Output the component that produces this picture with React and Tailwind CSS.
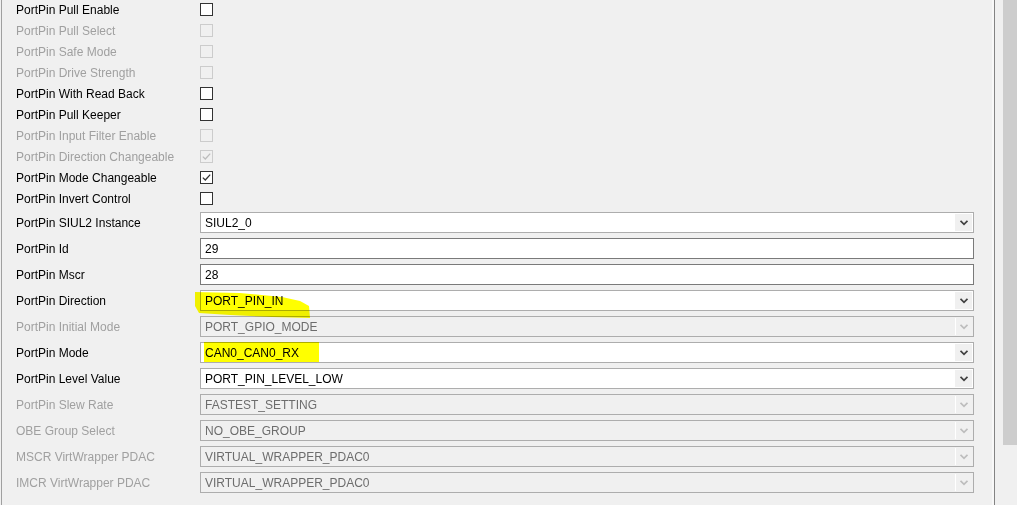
import React from "react"

const checkRows = [
  { label: "PortPin Pull Enable", on: true, checked: false },
  { label: "PortPin Pull Select", on: false, checked: false },
  { label: "PortPin Safe Mode", on: false, checked: false },
  { label: "PortPin Drive Strength", on: false, checked: false },
  { label: "PortPin With Read Back", on: true, checked: false },
  { label: "PortPin Pull Keeper", on: true, checked: false },
  { label: "PortPin Input Filter Enable", on: false, checked: false },
  { label: "PortPin Direction Changeable", on: false, checked: true },
  { label: "PortPin Mode Changeable", on: true, checked: true },
  { label: "PortPin Invert Control", on: true, checked: false },
]

const fieldRows = [
  { label: "PortPin SIUL2 Instance", value: "SIUL2_0", kind: "select", on: true },
  { label: "PortPin Id", value: "29", kind: "text", on: true },
  { label: "PortPin Mscr", value: "28", kind: "text", on: true },
  { label: "PortPin Direction", value: "PORT_PIN_IN", kind: "select", on: true },
  { label: "PortPin Initial Mode", value: "PORT_GPIO_MODE", kind: "select", on: false },
  { label: "PortPin Mode", value: "CAN0_CAN0_RX", kind: "select", on: true },
  { label: "PortPin Level Value", value: "PORT_PIN_LEVEL_LOW", kind: "select", on: true },
  { label: "PortPin Slew Rate", value: "FASTEST_SETTING", kind: "select", on: false },
  { label: "OBE Group Select", value: "NO_OBE_GROUP", kind: "select", on: false },
  { label: "MSCR VirtWrapper PDAC", value: "VIRTUAL_WRAPPER_PDAC0", kind: "select", on: false },
  { label: "IMCR VirtWrapper PDAC", value: "VIRTUAL_WRAPPER_PDAC0", kind: "select", on: false },
]

function Chevron({ on }) {
  return (
    <svg width="8" height="6" viewBox="0 0 8 6">
      <path d="M0.5 0.8 L4 4.3 L7.5 0.8" fill="none" stroke={on ? "#404040" : "#bdbdbd"} strokeWidth="1.8" />
    </svg>
  )
}

function CheckBox({ on, checked }) {
  return (
    <div
      className={
        "flex h-[13px] w-[13px] items-center justify-center border " +
        (on ? "border-[#333333] bg-white" : "border-[#cccccc] bg-[#f0f0f0]")
      }
    >
      {checked && (
        <svg width="11" height="11" viewBox="0 0 11 11">
          <path d="M1.8 5.6 L4.3 8 L9.2 2.6" fill="none" stroke={on ? "#333333" : "#bcbcbc"} strokeWidth="1.3" />
        </svg>
      )}
    </div>
  )
}

function Field({ value, kind, on }) {
  if (kind === "text") {
    return (
      <div className="flex h-[21px] w-[774px] items-center border border-[#7a7a7a] bg-white pl-[4px] text-black">
        {value}
      </div>
    )
  }
  return (
    <div
      className={
        "flex h-[21px] w-[774px] items-stretch border border-[#adadad] p-[1px] " +
        (on ? "bg-white text-black" : "bg-[#f0f0f0] text-[#6d6d6d]")
      }
    >
      <div className="flex flex-1 items-center pl-[3px]">{value}</div>
      <div
        className={
          "flex w-[17px] items-center justify-center bg-[#f0f0f0] " + (on ? "" : "border-l border-white")
        }
      >
        <Chevron on={on} />
      </div>
    </div>
  )
}

export default function App() {
  return (
    <div
      className="relative flex h-[505px] w-[1017px] overflow-hidden bg-[#f0f0f0] text-[12px]"
      style={{ fontFamily: '"Liberation Sans", Arial, sans-serif' }}
    >
      <div className="ml-[1px] w-[1px] bg-[#a0a0a0]" />

      <div className="flex w-[990px] flex-col">
        <div className="mt-[-1px] flex flex-col">
          {checkRows.map((r) => (
            <div key={r.label} className="flex h-[21px] items-center pl-[14px]">
              <div className={"w-[184px] " + (r.on ? "text-black" : "text-[#a0a0a0]")}>{r.label}</div>
              <CheckBox on={r.on} checked={r.checked} />
            </div>
          ))}
        </div>
        <div className="flex flex-col">
          {fieldRows.map((r) => (
            <div key={r.label} className="flex h-[26px] items-center pb-[2px] pl-[14px] pt-[3px]">
              <div className={"w-[184px] " + (r.on ? "text-black" : "text-[#a0a0a0]")}>{r.label}</div>
              <Field value={r.value} kind={r.kind} on={r.on} />
            </div>
          ))}
        </div>
      </div>

      <div className="w-[2px] bg-[#f8f8f8]" />
      <div className="w-[1px] bg-[#838383]" />
      <div className="flex flex-1 justify-end bg-[#f0f0f0]">
        <div className="h-[445px] w-[14px] bg-[#cdcdcd]" />
      </div>

      <svg
        className="pointer-events-none absolute left-0 top-0 mix-blend-multiply"
        width="1017"
        height="505"
        viewBox="0 0 1017 505"
      >
        <path
          d="M195 292 L240 293 L282 297 L300 301 L309 306 L310 318 L272 317 L230 315 L199 313 L195 306 Z"
          fill="#ffff00"
        />
        <rect x="204" y="342" width="115" height="20" fill="#ffff00" />
      </svg>
    </div>
  )
}
